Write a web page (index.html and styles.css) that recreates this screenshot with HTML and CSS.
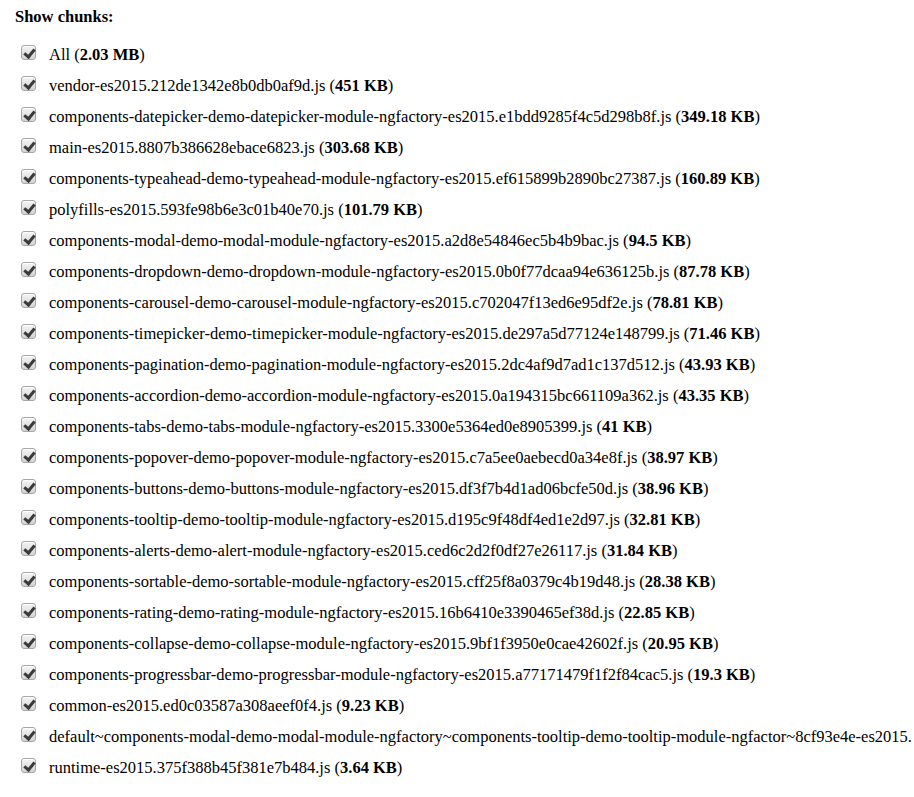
FILE: index.html
```html
<!DOCTYPE html>
<html>
<head>
<meta charset="utf-8">
<link rel="stylesheet" href="styles.css">
</head>
<body>
<div class="panel">
  <div class="title">Show chunks:</div>
  <ul class="chunks">
    <li class="chunk"><span class="box"></span><span class="label">All (<b>2.03 MB</b>)</span></li>
    <li class="chunk"><span class="box"></span><span class="label">vendor-es2015.212de1342e8b0db0af9d.js (<b>451 KB</b>)</span></li>
    <li class="chunk"><span class="box"></span><span class="label">components-datepicker-demo-datepicker-module-ngfactory-es2015.e1bdd9285f4c5d298b8f.js (<b>349.18 KB</b>)</span></li>
    <li class="chunk"><span class="box"></span><span class="label">main-es2015.8807b386628ebace6823.js (<b>303.68 KB</b>)</span></li>
    <li class="chunk"><span class="box"></span><span class="label">components-typeahead-demo-typeahead-module-ngfactory-es2015.ef615899b2890bc27387.js (<b>160.89 KB</b>)</span></li>
    <li class="chunk"><span class="box"></span><span class="label">polyfills-es2015.593fe98b6e3c01b40e70.js (<b>101.79 KB</b>)</span></li>
    <li class="chunk"><span class="box"></span><span class="label">components-modal-demo-modal-module-ngfactory-es2015.a2d8e54846ec5b4b9bac.js (<b>94.5 KB</b>)</span></li>
    <li class="chunk"><span class="box"></span><span class="label">components-dropdown-demo-dropdown-module-ngfactory-es2015.0b0f77dcaa94e636125b.js (<b>87.78 KB</b>)</span></li>
    <li class="chunk"><span class="box"></span><span class="label">components-carousel-demo-carousel-module-ngfactory-es2015.c702047f13ed6e95df2e.js (<b>78.81 KB</b>)</span></li>
    <li class="chunk"><span class="box"></span><span class="label">components-timepicker-demo-timepicker-module-ngfactory-es2015.de297a5d77124e148799.js (<b>71.46 KB</b>)</span></li>
    <li class="chunk"><span class="box"></span><span class="label">components-pagination-demo-pagination-module-ngfactory-es2015.2dc4af9d7ad1c137d512.js (<b>43.93 KB</b>)</span></li>
    <li class="chunk"><span class="box"></span><span class="label">components-accordion-demo-accordion-module-ngfactory-es2015.0a194315bc661109a362.js (<b>43.35 KB</b>)</span></li>
    <li class="chunk"><span class="box"></span><span class="label">components-tabs-demo-tabs-module-ngfactory-es2015.3300e5364ed0e8905399.js (<b>41 KB</b>)</span></li>
    <li class="chunk"><span class="box"></span><span class="label">components-popover-demo-popover-module-ngfactory-es2015.c7a5ee0aebecd0a34e8f.js (<b>38.97 KB</b>)</span></li>
    <li class="chunk"><span class="box"></span><span class="label">components-buttons-demo-buttons-module-ngfactory-es2015.df3f7b4d1ad06bcfe50d.js (<b>38.96 KB</b>)</span></li>
    <li class="chunk"><span class="box"></span><span class="label">components-tooltip-demo-tooltip-module-ngfactory-es2015.d195c9f48df4ed1e2d97.js (<b>32.81 KB</b>)</span></li>
    <li class="chunk"><span class="box"></span><span class="label">components-alerts-demo-alert-module-ngfactory-es2015.ced6c2d2f0df27e26117.js (<b>31.84 KB</b>)</span></li>
    <li class="chunk"><span class="box"></span><span class="label">components-sortable-demo-sortable-module-ngfactory-es2015.cff25f8a0379c4b19d48.js (<b>28.38 KB</b>)</span></li>
    <li class="chunk"><span class="box"></span><span class="label">components-rating-demo-rating-module-ngfactory-es2015.16b6410e3390465ef38d.js (<b>22.85 KB</b>)</span></li>
    <li class="chunk"><span class="box"></span><span class="label">components-collapse-demo-collapse-module-ngfactory-es2015.9bf1f3950e0cae42602f.js (<b>20.95 KB</b>)</span></li>
    <li class="chunk"><span class="box"></span><span class="label">components-progressbar-demo-progressbar-module-ngfactory-es2015.a77171479f1f2f84cac5.js (<b>19.3 KB</b>)</span></li>
    <li class="chunk"><span class="box"></span><span class="label">common-es2015.ed0c03587a308aeef0f4.js (<b>9.23 KB</b>)</span></li>
    <li class="chunk"><span class="box"></span><span class="label">default~components-modal-demo-modal-module-ngfactory~components-tooltip-demo-tooltip-module-ngfactor~8cf93e4e-es2015.</span></li>
    <li class="chunk"><span class="box"></span><span class="label">runtime-es2015.375f388b45f381e7b484.js (<b>3.64 KB</b>)</span></li>
  </ul>
</div>
</body>
</html>
```
FILE: styles.css
```css
html, body {
  margin: 0;
  padding: 0;
  overflow: hidden;
  background: #fff;
}
body {
  font-family: "Liberation Serif", "Times New Roman", Times, serif;
  font-size: 16.5px;
  color: #000;
}
.panel {
  padding: 8px 0 0 15px;
}
.title {
  font-weight: bold;
  line-height: 18px;
  height: 18px;
}
.chunks {
  list-style: none;
  margin: 13px 0 0 0;
  padding: 0 0 0 6px;
}
.chunk {
  display: flex;
  align-items: center;
  height: 31px;
  white-space: nowrap;
}
.box {
  flex: none;
  width: 13px;
  height: 13px;
  border: 1px solid #a6a6a6;
  border-radius: 3px;
  background: linear-gradient(#f4f4f4, #d4d4d4);
  margin: -5px 13px 0 0;
  position: relative;
  box-shadow: inset 0 1px 0 #fff;
}
.box::after {
  content: "";
  position: absolute;
  left: 4px;
  top: 1px;
  width: 4px;
  height: 8px;
  border: solid #3a3a3a;
  border-width: 0 3px 3px 0;
  transform: rotate(40deg);
}
.label b {
  font-weight: bold;
}
```
